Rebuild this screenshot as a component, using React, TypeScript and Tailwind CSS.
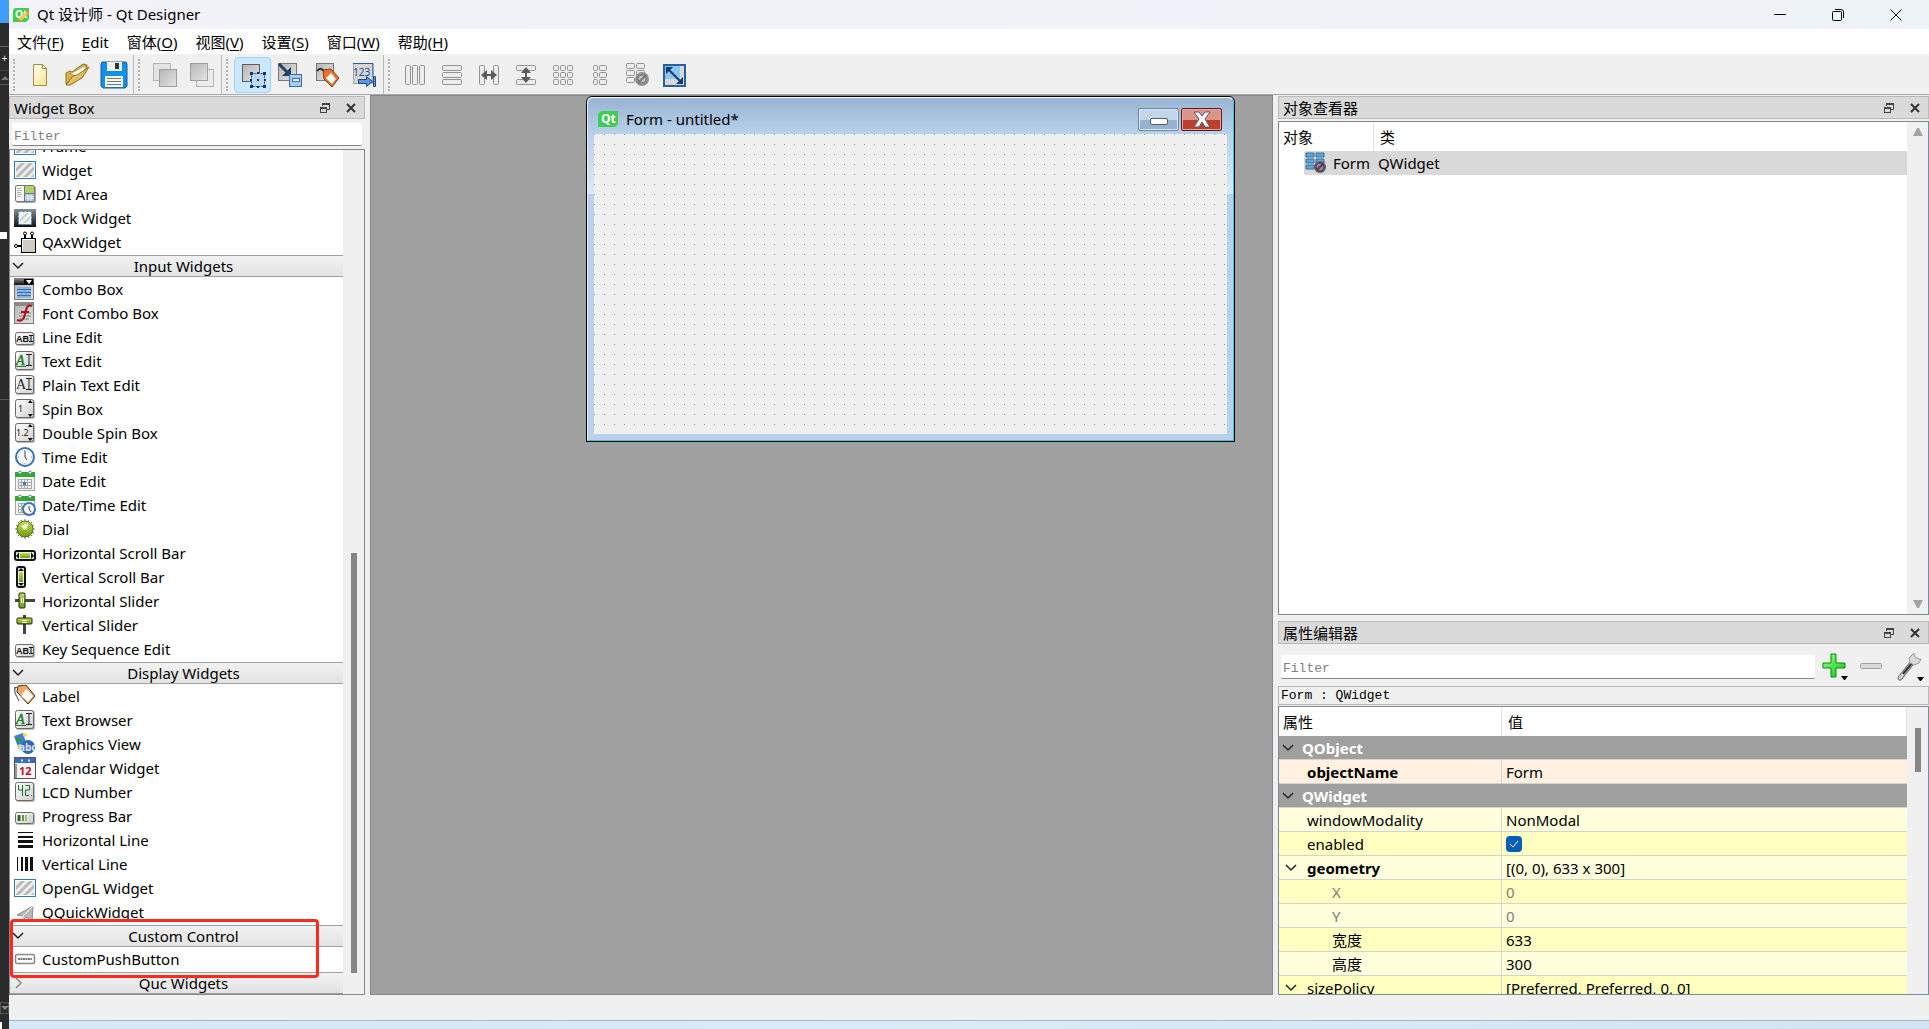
import React from 'react';

type IconProps = { children: React.ReactNode; size?: number };

const Icon: React.FC<IconProps> = ({ children, size = 22 }) => (
  <svg width={size} height={size} viewBox={`0 0 ${size} ${size}`} className="shrink-0" aria-hidden="true">
    {children}
  </svg>
);

// Bevelled grey plate shared by most of the input widget icons
const Plate: React.FC<{ y?: number; h?: number }> = ({ y = 1, h = 19 }) => (
  <>
    <rect x="2" y={y + 1} width="19" height={h} rx="2" fill="#bbb" />
    <rect x="1.5" y={y + 0.5} width="18" height={h - 1} rx="2" fill="url(#plate)" stroke="#6a6a6a" />
  </>
);

const SharedDefs = () => (
  <svg width="0" height="0" className="absolute" aria-hidden="true">
    <defs>
      <linearGradient id="plate" x1="0" y1="0" x2="1" y2="1">
        <stop offset="0" stopColor="#fff" />
        <stop offset="1" stopColor="#cfcfcf" />
      </linearGradient>
      <linearGradient id="steel" x1="0" y1="0" x2="1" y2="1">
        <stop offset="0" stopColor="#b5b5b5" />
        <stop offset="1" stopColor="#e4e4e4" />
      </linearGradient>
      <linearGradient id="dark" x1="0" y1="0" x2="0" y2="1">
        <stop offset="0" stopColor="#8c8c8c" />
        <stop offset="1" stopColor="#111" />
      </linearGradient>
      <linearGradient id="lime" x1="0" y1="0" x2="0" y2="1">
        <stop offset="0" stopColor="#c3e04a" />
        <stop offset="1" stopColor="#6f9a10" />
      </linearGradient>
      <linearGradient id="gold" x1="0" y1="0" x2="1" y2="1">
        <stop offset="0" stopColor="#fbe9a3" />
        <stop offset="1" stopColor="#c99a26" />
      </linearGradient>
      <linearGradient id="paper" x1="0" y1="0" x2="1" y2="1">
        <stop offset="0" stopColor="#fffef0" />
        <stop offset="1" stopColor="#f5e492" />
      </linearGradient>
      <linearGradient id="plus" x1="0" y1="0" x2="1" y2="1">
        <stop offset="0" stopColor="#a6f7a0" />
        <stop offset="1" stopColor="#00c800" />
      </linearGradient>
    </defs>
  </svg>
);

const HatchIcon = () => (
  <Icon>
    <rect x="0.5" y="2.5" width="21" height="17" fill="#fff" stroke="#2f78c4" />
    <rect x="2" y="4" width="18" height="14" fill="#ededeb" />
    <path d="M7 4h4l-9 9V9zM15 4h4L5 18H2v-1zM20 7v4l-7 7H9zM20 15v3h-3z" fill="#b8b8b6" />
  </Icon>
);

const MdiIcon = () => (
  <Icon>
    <rect x="2" y="3" width="20" height="17" rx="2" fill="#aaa" />
    <rect x="1.5" y="2.5" width="19" height="16" rx="1.5" fill="#f6f6f6" stroke="#777" />
    <rect x="11" y="3" width="9" height="7" fill="#a9d46c" />
    <rect x="11" y="11" width="9" height="7" fill="#9dbfe8" />
    <path d="M11 13.500h9M11 15.500h9M14 11v7M17 11v7" stroke="#e9f1fb" />
    <path d="M10.500 3v15M11 10.500h9" stroke="#777" />
    <path d="M3 5.500h4M3 7.500h5M3 9.500h4M3 11.500h5M3 13.500h4" stroke="#b5b5b5" />
  </Icon>
);

const DockIcon = () => (
  <Icon>
    <rect x="0" y="2" width="22" height="18" fill="url(#dark)" />
    <rect x="4.500" y="4.500" width="13" height="13" fill="#eef3fa" stroke="#3a7cc9" strokeDasharray="2 2" />
    <path d="M6 12l6-6h3l-9 9zM9 16l7-7v3l-4 4z" fill="#cfcfcf" />
  </Icon>
);

const AxIcon = () => (
  <Icon>
    <rect x="7.500" y="7.500" width="14" height="14" fill="#cfcac2" stroke="#000" />
    <path d="M8.500 20V8.500H20" stroke="#fff" fill="none" />
    <path d="M11 7V3M18 7V3M7 15H3" stroke="#000" strokeWidth="2" />
    <circle cx="11" cy="2.500" r="1.500" fill="#fff" stroke="#000" />
    <circle cx="18" cy="2.500" r="1.500" fill="#fff" stroke="#000" />
    <circle cx="2" cy="15" r="1.500" fill="#fff" stroke="#000" />
  </Icon>
);

const ComboIcon = () => (
  <Icon>
    <rect x="0.500" y="0.500" width="19" height="21" fill="url(#steel)" stroke="#777" />
    <rect x="0" y="0" width="20" height="7" fill="url(#dark)" />
    <path d="M10 1h9v5h-9z" fill="#000" />
    <path d="M12 2h6l-3 4z" fill="#fff" />
    <rect x="3" y="9" width="14" height="11" fill="#86b3e2" />
    <path d="M3 11.500h14M3 14.500h14M3 17.500h14" stroke="#3f6fa5" />
  </Icon>
);

const FontComboIcon = () => (
  <Icon>
    <rect x="0.500" y="0.500" width="19" height="21" fill="url(#steel)" stroke="#777" />
    <rect x="0" y="0" width="20" height="4" fill="#8a8a8a" />
    <path d="M5 11h12M5 14h12M5 17h10" stroke="#aaa" strokeWidth="2" />
    <path d="M18 4c-5-2-6 3-7 8s-3 8-8 6M7 10h8" stroke="#b00f1a" strokeWidth="2" fill="none" />
  </Icon>
);

const AbiIcon = () => (
  <Icon>
    <Plate y={6} h={13} />
    <text x="2" y="16" fontSize="9" fontWeight="bold" fontFamily="Liberation Sans, sans-serif" fill="#111">
      AB
    </text>
    <path d="M15 9.500h4M15 15.500h4M17 9v7" stroke="#111" />
  </Icon>
);

const AiIcon: React.FC<{ green?: boolean }> = ({ green }) => (
  <Icon>
    <Plate />
    <text
      x="2"
      y="15"
      fontSize="14"
      fontStyle={green ? 'italic' : 'normal'}
      fontFamily="Liberation Serif, serif"
      stroke={green ? '#237a2c' : 'none'}
      strokeWidth="0.5"
      fill={green ? '#237a2c' : '#222'}
    >
      A
    </text>
    {green && <path d="M2 16.500h10" stroke="#237a2c" />}
    <path d="M12 4.500h6M12 15.500h6M15 5v11" stroke="#222" />
  </Icon>
);

const SpinIcon: React.FC<{ label: string }> = ({ label }) => (
  <Icon>
    <Plate />
    <text x={label.length > 1 ? 2 : 4} y="14" fontSize="9" fontFamily="Noto Sans, sans-serif" fill="#222">
      {label}
    </text>
    <path d="M14 5l2-3 3 3zM14 16h5l-3 3z" fill="#111" />
  </Icon>
);

const Clock: React.FC<{ cx: number; cy: number; r: number }> = ({ cx, cy, r }) => (
  <>
    <circle cx={cx} cy={cy} r={r} fill="#f4f6fa" stroke="#3b74b9" strokeWidth="2" />
    <path d={`M${cx} ${cy - r + 3}V${cy}l2 3`} stroke="#444" fill="none" />
  </>
);

const TimeIcon = () => (
  <Icon>
    <Clock cx={11} cy={11} r={9} />
    <path d="M11 4v1M11 17v1M4 11h1M17 11h1" stroke="#8b95a5" />
  </Icon>
);

const DateIcon: React.FC<{ clock?: boolean }> = ({ clock }) => (
  <Icon>
    <rect x="1.500" y="4.500" width="19" height="16" fill="#f3f3f3" stroke="#a6a6a6" />
    <rect x="1" y="2" width="20" height="5" fill="#2ea836" />
    <circle cx="6" cy="2.500" r="1.500" fill="#eee" stroke="#888" />
    <circle cx="16" cy="2.500" r="1.500" fill="#eee" stroke="#888" />
    <path d="M4 9.500h14M4 12.500h14M4 15.500h14M4 18.500h14M4.500 9v10M7.500 9v10M10.500 9v10M13.500 9v10M17.500 9v10" stroke="#a9a9a9" />
    {clock ? <Clock cx={15} cy={15} r={6} /> : <rect x="9" y="12" width="3" height="3" fill="#2f78d4" />}
  </Icon>
);

const DialIcon = () => (
  <Icon>
    <path d="M11 1v20M1 11h20M4 4l14 14M18 4L4 18M7 2l8 18M15 2L7 20M2 7l18 8M2 15l18-8" stroke="#777" />
    <circle cx="11" cy="11" r="8" fill="url(#lime)" stroke="#4f7311" />
    <path d="M7 8l7-3-1 6-3 1z" fill="#f4f9df" />
  </Icon>
);

const HScrollIcon = () => (
  <Icon>
    <rect x="1" y="9" width="20" height="9" rx="2" fill="#f2f2f2" stroke="#111" strokeWidth="2" />
    <rect x="6" y="11" width="10" height="5" fill="url(#lime)" />
    <path d="M5 10v7l-3-3zM17 10v7l3-3z" fill="#111" />
  </Icon>
);

const VScrollIcon = () => (
  <Icon>
    <rect x="3" y="1" width="8" height="20" rx="2" fill="#f2f2f2" stroke="#111" strokeWidth="2" />
    <rect x="5" y="6" width="4" height="10" fill="url(#lime)" />
    <path d="M4 5l3-3 3 3zM4 17h6l-3 3z" fill="#111" />
  </Icon>
);

const HSliderIcon = () => (
  <Icon>
    <path d="M1 10.500h20" stroke="#444" strokeWidth="3" />
    <rect x="5" y="3" width="6" height="15" rx="1" fill="url(#lime)" stroke="#222" />
    <path d="M7.500 8v5M9.500 8v5" stroke="#f5fbdc" />
  </Icon>
);

const VSliderIcon = () => (
  <Icon>
    <path d="M10.500 1v19" stroke="#444" strokeWidth="3" />
    <rect x="3" y="4" width="15" height="6" rx="1" fill="url(#lime)" stroke="#222" />
    <path d="M8 6.500h5M8 8.500h5" stroke="#f5fbdc" />
  </Icon>
);

const TagIcon = () => (
  <Icon>
    <path d="M0 3c4-2 4 2 6 4M1 3c-1 6 2 8 4 13" stroke="#333" fill="none" />
    <path d="M4 1l8-1 9 11-7 8L3 7z" fill="#f0a868" stroke="#4a2c15" />
    <path d="M12 4l7 7-5 6-7-6z" fill="#fff" />
  </Icon>
);

const GraphicsIcon = () => (
  <Icon>
    <path d="M0 3l9-3 4 13-8 4z" fill="#3d7fe0" />
    <path d="M3 12l9-2 1 3-8 4z" fill="#e7cf8b" />
    <path d="M2 6c3-3 5 0 6 1l-2 1 2 5-3-5-3 1z" fill="#2c9a36" />
    <circle cx="11" cy="2" r="2" fill="#ffd84a" />
    <circle cx="14" cy="14" r="7" fill="#3567b5" />
    <text x="5" y="18" fontSize="10" fontWeight="bold" fontFamily="Noto Sans, sans-serif" fill="#dbe6f6">
      abc
    </text>
  </Icon>
);

const CalendarIcon = () => (
  <Icon>
    <rect x="0.500" y="0.500" width="21" height="21" fill="#f4f4f4" stroke="#555" />
    <rect x="1" y="1" width="20" height="5" fill="#3a6db5" />
    <path d="M7 3.500h2M14 3.500h2" stroke="#dfe9f7" strokeWidth="2" />
    <path d="M1 7v14h2V7z" fill="#999" />
    <text x="5" y="18" fontSize="11" fontWeight="bold" fontFamily="Noto Sans, sans-serif" fill="#c4161c">
      12
    </text>
  </Icon>
);

const LcdIcon = () => (
  <Icon>
    <Plate />
    <path d="M4.500 4v5h4M8.500 4v11M11.500 4.500h4V9h-4v5.500H15M17 14.500h1" stroke="#1d6b2a" fill="none" />
  </Icon>
);

const ProgressIcon = () => (
  <Icon>
    <Plate y={7} h={12} />
    <path d="M5 10v6" stroke="#2f6c12" strokeWidth="3" />
    <path d="M9 10v6" stroke="#6b9540" strokeWidth="2" />
    <path d="M12 10v6" stroke="#9fb98b" strokeWidth="2" />
    <path d="M16 10v6" stroke="#ccd6c5" strokeWidth="2" />
  </Icon>
);

const HLineIcon = () => (
  <Icon>
    <path d="M4 3.500h15" stroke="#111" />
    <path d="M4 8h15" stroke="#111" strokeWidth="2" />
    <path d="M4 12.500h15" stroke="#111" strokeWidth="3" />
    <path d="M4 17.500h15" stroke="#111" strokeWidth="3" />
  </Icon>
);

const VLineIcon = () => (
  <Icon>
    <path d="M3.500 4v14" stroke="#111" />
    <path d="M8 4v14" stroke="#111" strokeWidth="2" />
    <path d="M12.500 4v14" stroke="#111" strokeWidth="3" />
    <path d="M17.500 4v14" stroke="#111" strokeWidth="3" />
  </Icon>
);

const QuickIcon = () => (
  <Icon>
    <path d="M3 14L19 5l-1 15-6-4-3 3v-4z" fill="#b9b9b9" stroke="#8c8c8c" />
    <path d="M19 5L9 15v4" stroke="#fff" fill="none" />
  </Icon>
);

const ButtonIcon = () => (
  <Icon>
    <rect x="1.500" y="6.500" width="19" height="9" rx="1.500" fill="#fafafa" stroke="#8a8a8a" strokeWidth="1.500" />
    <path d="M4 11h14" stroke="#777" strokeWidth="2" strokeDasharray="2 0.500" />
  </Icon>
);

const QtIcon = () => (
  <svg width="20" height="16" viewBox="0 0 20 16" className="shrink-0" aria-hidden="true">
    <path d="M3 0h17v13l-3 3H0V3z" fill="#41cd52" />
    <text x="3" y="12" fontSize="12" fontWeight="bold" fontFamily="Open Sans, sans-serif" fill="#fff">
      Qt
    </text>
  </svg>
);

const DesignerIcon = () => (
  <svg width="16" height="16" viewBox="0 0 16 16" className="shrink-0" aria-hidden="true">
    <path d="M2 1h14v11l-3 3H0V3z" fill="#41cd52" />
    <text x="2" y="11" fontSize="10" fontWeight="bold" fontFamily="Open Sans, sans-serif" fill="#fff">
      Qt
    </text>
    <path d="M5 15l1-4 8-7 2 2-8 8z" fill="#f7c948" />
    <path d="M5 15l1-3 2 2z" fill="#b98a3a" />
    <path d="M13 5l2-2 1 1v2l-1 1z" fill="#e08b3a" />
  </svg>
);

const Box: React.FC<{ x: number; y: number; w: number; h: number }> = ({ x, y, w, h }) => (
  <rect x={x + 0.5} y={y + 0.5} width={w - 1} height={h - 1} rx="1" fill="#ececec" stroke="#939393" />
);

const NewIcon = () => (
  <Icon size={26}>
    <path d="M6.500 2.500h9l4 4v17h-13z" fill="url(#paper)" stroke="#a8893a" />
    <path d="M15.500 2.500v4h4z" fill="#fff" stroke="#a8893a" />
  </Icon>
);

const OpenIcon = () => (
  <Icon size={26}>
    <path d="M2 22V11l4-2 2 1 11-8 4 1v4z" fill="#d8b04a" stroke="#94701c" />
    <path d="M6 12L20 4l2 2-6 9z" fill="#fffdf2" stroke="#b89a52" />
    <path d="M2 23l7-9 4-1 12-8-7 11-12 7z" fill="url(#gold)" stroke="#94701c" />
  </Icon>
);

const SaveIcon = () => (
  <Icon size={28}>
    <path d="M2 1h24l1 2v22l-2 2H3l-2-2V3z" fill="#0f8fee" stroke="#1d5c94" />
    <rect x="7" y="1" width="15" height="9" fill="#eee" />
    <rect x="15" y="2" width="4" height="6" fill="#333" />
    <rect x="5" y="15" width="18" height="11" fill="#f5f5f5" />
    <path d="M7 17.500h14M7 20.500h14M7 23.500h14" stroke="#777" />
  </Icon>
);

const LowerIcon = () => (
  <Icon size={26}>
    <rect x="1.500" y="1.500" width="17" height="17" fill="#e3e3e3" stroke="#b5b5b5" />
    <rect x="7.500" y="7.500" width="17" height="17" fill="url(#steel)" stroke="#a0a0a0" />
  </Icon>
);

const RaiseIcon = () => (
  <Icon size={26}>
    <rect x="7.500" y="7.500" width="17" height="17" fill="#ececec" stroke="#b5b5b5" />
    <rect x="1.500" y="1.500" width="17" height="17" fill="url(#steel)" stroke="#a0a0a0" />
  </Icon>
);

const EditWidgetsIcon = () => (
  <Icon size={26}>
    <rect x="2.500" y="2.500" width="17" height="17" fill="url(#steel)" stroke="#5c5c5c" />
    <rect x="11.500" y="11.500" width="13" height="13" fill="#bdd8f7" stroke="#1d4f91" strokeDasharray="2 1" />
    <path d="M10 10h3v3h-3zM17 10h2v2h-2zM23 10h3v3h-3zM10 17h2v2h-2zM24 17h2v2h-2zM10 23h3v3h-3zM17 24h2v2h-2zM23 23h3v3h-3zM17 17h2v2h-2z" fill="#17365f" />
  </Icon>
);

const SignalsIcon = () => (
  <Icon size={26}>
    <rect x="1.500" y="1.500" width="18" height="17" fill="url(#steel)" stroke="#777" />
    <path d="M2 2l8 8" stroke="#23405f" strokeWidth="3" fill="none" />
    <path d="M14 5v9H5z" fill="#23405f" />
    <rect x="12.500" y="12.500" width="12" height="12" fill="#a9ccf5" stroke="#3a6db0" />
    <rect x="15.500" y="16.500" width="7" height="3" fill="#fff" stroke="#3a6db0" />
  </Icon>
);

const BuddyIcon = () => (
  <Icon size={26}>
    <rect x="2.500" y="1.500" width="17" height="17" fill="url(#steel)" stroke="#777" />
    <path d="M3 9c3-4 6-2 8 2" stroke="#333" strokeWidth="2" fill="none" />
    <path d="M9 8l8-1 8 9-7 9-8-8z" fill="#e8722a" stroke="#8a3b0c" />
    <path d="M17 11l5 6-4 5-6-6z" fill="#fff" />
  </Icon>
);

const TabOrderIcon = () => (
  <Icon size={26}>
    <rect x="2.500" y="1.500" width="19" height="20" fill="#d5d5d5" stroke="#9aa6b5" />
    <path d="M2 1.500h20v13" stroke="#2f5f9e" fill="none" />
    <text x="2" y="14" fontSize="10" fontFamily="Noto Sans, sans-serif" fill="#1f4a86">
      123
    </text>
    <path d="M7.500 17.500h8v-3l6 5-6 5v-3h-8zM22.500 14.500h2v10h-2z" fill="#5b95e0" stroke="#1f4a86" />
  </Icon>
);

const HLayoutIcon = () => (
  <Icon size={24}>
    <Box x={2} y={2} w={6} h={20} />
    <Box x={9} y={2} w={6} h={20} />
    <Box x={16} y={2} w={6} h={20} />
  </Icon>
);

const VLayoutIcon = () => (
  <Icon size={24}>
    <Box x={2} y={2} w={20} h={6} />
    <Box x={2} y={9} w={20} h={6} />
    <Box x={2} y={16} w={20} h={6} />
  </Icon>
);

const HSplitIcon = () => (
  <Icon size={24}>
    <Box x={2} y={2} w={6} h={20} />
    <Box x={16} y={2} w={6} h={20} />
    <path d="M4 12l6-5v4h4V7l6 5-6 5v-4h-4v4z" fill="#5c5c5c" />
  </Icon>
);

const VSplitIcon = () => (
  <Icon size={24}>
    <Box x={2} y={2} w={20} h={6} />
    <Box x={2} y={16} w={20} h={6} />
    <path d="M12 4l5 6h-4v4h4l-5 6-5-6h4v-4H7z" fill="#5c5c5c" />
  </Icon>
);

const GridIcon = () => (
  <Icon size={24}>
    {[2, 9, 16].map(y => [2, 9, 16].map(x => <Box key={`${x}-${y}`} x={x} y={y} w={6} h={6} />))}
  </Icon>
);

const FormLayoutIcon = () => (
  <Icon size={24}>
    {[2, 9, 16].map(y => (
      <React.Fragment key={y}>
        <Box x={5} y={y} w={5} h={6} />
        <Box x={11} y={y} w={8} h={6} />
      </React.Fragment>
    ))}
  </Icon>
);

const BreakLayoutIcon = () => (
  <Icon size={26}>
    <Box x={2} y={1} w={9} h={6} />
    <Box x={12} y={1} w={9} h={6} />
    <Box x={2} y={8} w={9} h={6} />
    <Box x={12} y={8} w={9} h={6} />
    <Box x={2} y={15} w={9} h={6} />
    <circle cx="18" cy="17" r="7" fill="#8f8f8f" />
    <circle cx="18" cy="17" r="4" fill="#c4c4c4" stroke="#777" />
    <path d="M14 21l8-8" stroke="#777" strokeWidth="2" />
  </Icon>
);

const AdjustIcon = () => (
  <Icon size={26}>
    <rect x="3" y="3" width="21" height="21" fill="#d8d8d8" stroke="#2a5f9e" strokeWidth="2" />
    <rect x="4" y="4" width="15" height="13" fill="#8cc4f2" />
    <path d="M7 7l12 12" stroke="#103c6b" strokeWidth="2" />
    <path d="M5 5h7l-7 7zM22 22h-7l7-7z" fill="#103c6b" />
  </Icon>
);

const FormObjectIcon = () => (
  <Icon>
    <path d="M1 1h8v4H1zM11 1h8v4h-8zM1 7h8v4H1zM11 7h8v4h-8zM1 13h8v4H1z" fill="#58a9e0" stroke="#3d6d95" />
    <circle cx="15" cy="15" r="6" fill="#6c5566" />
    <circle cx="15" cy="15" r="4" fill="#8095b8" stroke="#5e3444" />
    <path d="M12 18l6-6" stroke="#5e3444" strokeWidth="2" />
  </Icon>
);

const Chevron: React.FC<{ closed?: boolean }> = ({ closed }) => (
  <svg width="12" height="12" viewBox="0 0 12 12" className="shrink-0" fill="none" strokeWidth="1.5" aria-hidden="true">
    {closed ? <path d="M4 1l5 5-5 5" stroke="#8a8a8a" /> : <path d="M1 3l5 5 5-5" stroke="#222" />}
  </svg>
);

interface WidgetGroup {
  title: string;
  open: boolean;
  marked?: boolean;
  items: { label: string; icon: React.ReactNode }[];
}

const CONTAINER_ITEMS = [
  { label: 'Frame', icon: <HatchIcon /> },
  { label: 'Widget', icon: <HatchIcon /> },
  { label: 'MDI Area', icon: <MdiIcon /> },
  { label: 'Dock Widget', icon: <DockIcon /> },
  { label: 'QAxWidget', icon: <AxIcon /> },
];

const GROUPS: WidgetGroup[] = [
  {
    title: 'Input Widgets',
    open: true,
    items: [
      { label: 'Combo Box', icon: <ComboIcon /> },
      { label: 'Font Combo Box', icon: <FontComboIcon /> },
      { label: 'Line Edit', icon: <AbiIcon /> },
      { label: 'Text Edit', icon: <AiIcon green /> },
      { label: 'Plain Text Edit', icon: <AiIcon /> },
      { label: 'Spin Box', icon: <SpinIcon label="1" /> },
      { label: 'Double Spin Box', icon: <SpinIcon label="1.2" /> },
      { label: 'Time Edit', icon: <TimeIcon /> },
      { label: 'Date Edit', icon: <DateIcon /> },
      { label: 'Date/Time Edit', icon: <DateIcon clock /> },
      { label: 'Dial', icon: <DialIcon /> },
      { label: 'Horizontal Scroll Bar', icon: <HScrollIcon /> },
      { label: 'Vertical Scroll Bar', icon: <VScrollIcon /> },
      { label: 'Horizontal Slider', icon: <HSliderIcon /> },
      { label: 'Vertical Slider', icon: <VSliderIcon /> },
      { label: 'Key Sequence Edit', icon: <AbiIcon /> },
    ],
  },
  {
    title: 'Display Widgets',
    open: true,
    items: [
      { label: 'Label', icon: <TagIcon /> },
      { label: 'Text Browser', icon: <AiIcon green /> },
      { label: 'Graphics View', icon: <GraphicsIcon /> },
      { label: 'Calendar Widget', icon: <CalendarIcon /> },
      { label: 'LCD Number', icon: <LcdIcon /> },
      { label: 'Progress Bar', icon: <ProgressIcon /> },
      { label: 'Horizontal Line', icon: <HLineIcon /> },
      { label: 'Vertical Line', icon: <VLineIcon /> },
      { label: 'OpenGL Widget', icon: <HatchIcon /> },
      { label: 'QQuickWidget', icon: <QuickIcon /> },
    ],
  },
  {
    title: 'Custom Control',
    open: true,
    marked: true,
    items: [{ label: 'CustomPushButton', icon: <ButtonIcon /> }],
  },
  { title: 'Quc Widgets', open: false, items: [] },
];

const MENUS = [
  { text: '文件', key: 'F' },
  { text: '', key: 'Edit' },
  { text: '窗体', key: 'O' },
  { text: '视图', key: 'V' },
  { text: '设置', key: 'S' },
  { text: '窗口', key: 'W' },
  { text: '帮助', key: 'H' },
];

const TOOL_GROUPS = [
  [
    { name: 'New', icon: <NewIcon /> },
    { name: 'Open', icon: <OpenIcon /> },
    { name: 'Save', icon: <SaveIcon /> },
  ],
  [
    { name: 'Send to Back', icon: <LowerIcon /> },
    { name: 'Bring to Front', icon: <RaiseIcon /> },
  ],
  [
    { name: 'Edit Widgets', icon: <EditWidgetsIcon />, active: true },
    { name: 'Edit Signals/Slots', icon: <SignalsIcon /> },
    { name: 'Edit Buddies', icon: <BuddyIcon /> },
    { name: 'Edit Tab Order', icon: <TabOrderIcon /> },
  ],
  [
    { name: 'Lay Out Horizontally', icon: <HLayoutIcon /> },
    { name: 'Lay Out Vertically', icon: <VLayoutIcon /> },
    { name: 'Horizontal Splitter', icon: <HSplitIcon /> },
    { name: 'Vertical Splitter', icon: <VSplitIcon /> },
    { name: 'Lay Out in a Grid', icon: <GridIcon /> },
    { name: 'Lay Out in a Form', icon: <FormLayoutIcon /> },
    { name: 'Break Layout', icon: <BreakLayoutIcon /> },
    { name: 'Adjust Size', icon: <AdjustIcon /> },
  ],
];

interface Property {
  name: string;
  value?: string;
  checked?: boolean;
  kind: 'group' | 'top' | 'child';
  expandable?: boolean;
  bold?: boolean;
  dim?: boolean;
  bg: string;
}

const PROPERTIES: Property[] = [
  { name: 'QObject', kind: 'group', expandable: true, bg: 'bg-[#a0a0a0]' },
  { name: 'objectName', value: 'Form', kind: 'top', bold: true, bg: 'bg-[#fff0df]' },
  { name: 'QWidget', kind: 'group', expandable: true, bg: 'bg-[#a0a0a0]' },
  { name: 'windowModality', value: 'NonModal', kind: 'top', bg: 'bg-[#ffffdc]' },
  { name: 'enabled', checked: true, kind: 'top', bg: 'bg-[#ffffbf]' },
  { name: 'geometry', value: '[(0, 0), 633 x 300]', kind: 'top', expandable: true, bold: true, bg: 'bg-[#ffffdc]' },
  { name: 'X', value: '0', kind: 'child', dim: true, bg: 'bg-[#ffffbf]' },
  { name: 'Y', value: '0', kind: 'child', dim: true, bg: 'bg-[#ffffdc]' },
  { name: '宽度', value: '633', kind: 'child', bg: 'bg-[#ffffbf]' },
  { name: '高度', value: '300', kind: 'child', bg: 'bg-[#ffffdc]' },
  { name: 'sizePolicy', value: '[Preferred, Preferred, 0, 0]', kind: 'top', expandable: true, bg: 'bg-[#ffffbf]' },
];

const TitleBar = () => (
  <header className="flex h-[29px] shrink-0 items-center bg-linear-to-r from-[#f2f2f8] to-[#eef3f8] px-1">
    <DesignerIcon />
    <h1 className="flex-1 pl-2 text-[15px]">Qt 设计师 - Qt Designer</h1>
    <button type="button" aria-label="Minimize" className="flex h-full w-[58px] items-center justify-center">
      <span className="h-px w-3 bg-black" />
    </button>
    <button type="button" aria-label="Restore" className="flex h-full w-[58px] items-center justify-center">
      <svg width="12" height="12" viewBox="0 0 12 12" fill="none" stroke="#000">
        <rect x="0.5" y="2.5" width="9" height="9" rx="1" />
        <path d="M3 0.500h6a2.500 2.500 0 0 1 2.500 2.500v6" />
      </svg>
    </button>
    <button type="button" aria-label="Close" className="flex h-full w-[58px] items-center justify-center">
      <svg width="12" height="12" viewBox="0 0 12 12" stroke="#000">
        <path d="M0.500 0.500l11 11M11.500 0.500l-11 11" />
      </svg>
    </button>
  </header>
);

const MenuBar = () => (
  <nav className="flex h-[26px] shrink-0 items-center gap-0.5 border-b border-[#f2f2f2] bg-white">
    {MENUS.map(menu => (
      <button key={menu.key} type="button" className="px-2 text-[15px] leading-5">
        {menu.text ? (
          <>
            {menu.text}(<span className="underline underline-offset-2">{menu.key}</span>)
          </>
        ) : (
          <>
            <span className="underline underline-offset-2">E</span>dit
          </>
        )}
      </button>
    ))}
  </nav>
);

const ToolBar = () => (
  <div className="flex h-10 shrink-0 border-b border-[#a9a9a9]" role="toolbar">
    {TOOL_GROUPS.map((group, index) => (
      <div
        key={index}
        className={`flex items-center pr-px ${index < TOOL_GROUPS.length - 1 ? 'border-r border-[#b9b9b9]' : ''}`}
      >
        <span className="ml-1 mr-1.5 h-8 border-l-2 border-dotted border-[#b3b3b3]" />
        {group.map(tool => (
          <button
            key={tool.name}
            type="button"
            aria-label={tool.name}
            className={`flex h-9 w-[37px] items-center justify-center rounded-sm border ${
              'active' in tool ? 'border-[#99d1ff] bg-[#cce8ff]' : 'border-transparent'
            }`}
          >
            {tool.icon}
          </button>
        ))}
      </div>
    ))}
  </div>
);

const DockTitle: React.FC<{ title: string }> = ({ title }) => (
  <div className="flex h-[23px] shrink-0 items-center border border-[#b9b9b9] bg-[#dadada] pl-1 pr-[7px]">
    <h2 className="flex-1 text-[15px] leading-5">{title}</h2>
    <button type="button" aria-label={`Float ${title}`} className="mr-3.5">
      <svg width="12" height="12" viewBox="0 0 12 12" fill="none" stroke="#444">
        <path d="M3.500 4V1.500h7v6H8" />
        <path d="M3 2h8M1 6h7" strokeWidth="2" />
        <rect x="1.500" y="5.500" width="6" height="5" />
      </svg>
    </button>
    <button type="button" aria-label={`Close ${title}`}>
      <svg width="12" height="12" viewBox="0 0 12 12" stroke="#333" strokeWidth="2">
        <path d="M2 2l8 8M10 2l-8 8" />
      </svg>
    </button>
  </div>
);

const WidgetRow: React.FC<{ label: string; icon: React.ReactNode }> = ({ label, icon }) => (
  <li className="flex h-6 items-center gap-1.5 pl-1 text-[15px] leading-5">
    {icon}
    {label}
  </li>
);

const WidgetBox = () => (
  <aside className="flex w-[356px] shrink-0 flex-col pt-px">
    <DockTitle title="Widget Box" />
    <input
      type="text"
      aria-label="Filter widgets"
      placeholder="Filter"
      className="mx-[3px] mb-[3px] mt-1 h-[23px] rounded-xs border-b border-[#868686] bg-white px-0.5 pt-1 font-['Liberation_Mono',monospace] text-[13px] placeholder:text-[#808080]"
    />
    <div className="flex min-h-0 flex-1 border border-[#828790]">
      <div className="flex min-w-0 flex-1 flex-col justify-end overflow-hidden bg-white">
        <ul className="pb-px">
          {CONTAINER_ITEMS.map(item => (
            <WidgetRow key={item.label} {...item} />
          ))}
        </ul>
        {GROUPS.map(group => (
          <section key={group.title} className="relative">
            <button
              type="button"
              aria-expanded={group.open}
              className="flex h-[22px] w-full items-center border-y border-[#a0a0a0] bg-linear-to-b from-[#f2f2f2] to-[#e3e3e3] pl-0.5 pr-1"
            >
              <Chevron closed={!group.open} />
              <span className="flex-1 pl-1 text-center text-[15px] leading-5">{group.title}</span>
            </button>
            {group.open && (
              <ul className="pb-px">
                {group.items.map(item => (
                  <WidgetRow key={item.label} {...item} />
                ))}
              </ul>
            )}
            {group.marked && (
              <div className="absolute -bottom-1.5 -top-1.5 left-0 z-10 w-[309px] rounded-sm border-3 border-[#ff2a1c]" />
            )}
          </section>
        ))}
      </div>
      <div className="flex w-[21px] flex-col items-center justify-end bg-[#f0f0f0] pb-[21px]">
        <div className="h-[51%] w-1.5 bg-[#868686]" />
      </div>
    </div>
  </aside>
);

const FormWindow = () => (
  <div className="absolute left-[215px] top-0 rounded-t-md border border-black bg-[#b9d1ea]">
    <div className="rounded-t-md border border-b-[#35c8e0] border-l-[#e3eefa] border-r-[#35c8e0] border-t-white">
      <div className="flex h-9 items-center rounded-t-md bg-linear-to-b from-[#98b4d2] to-[#b9d1ea] pl-2.5 pr-[11px] pt-1.5">
        <QtIcon />
        <span className="flex-1 pl-2 text-[15px]">Form - untitled*</span>
        <button
          type="button"
          aria-label="Minimize form"
          className="mr-0.5 flex h-[23px] w-[41px] items-center justify-center rounded-xs border border-[#6c87ab] bg-linear-to-b from-[#c3d6ea] from-50% to-[#97b1d0] to-50% shadow-[inset_0_0_0_1px_#dbe7f4]"
        >
          <span className="mt-1 h-[7px] w-[18px] rounded-xs border border-[#5c5c6c] bg-white" />
        </button>
        <button
          type="button"
          aria-label="Close form"
          className="flex h-[23px] w-[41px] items-center justify-center rounded-xs border border-[#5b1d23] bg-linear-to-b from-[#dc9488] from-50% to-[#bb3f2b] to-50% shadow-[inset_0_0_0_1px_#e5a79c]"
        >
          <svg width="20" height="17" viewBox="0 0 20 17" aria-hidden="true">
            <path
              d="M2 1h5l3 4 3-4h5l-5 7 5 8h-5l-3-5-3 5H2l5-8z"
              fill="#f5f5f5"
              stroke="#5c5c6c"
              strokeLinejoin="round"
            />
          </svg>
        </button>
      </div>
      <div className="bg-linear-to-b from-[#b9d1ea] to-[#dce8f6] bg-[length:100%_60px] bg-no-repeat px-1.5 pb-1.5">
        <div className="h-[300px] w-[633px] bg-[#f0f0f0] bg-[conic-gradient(from_270deg_at_1px_1px,#a0a0a0_90deg,transparent_0)] bg-[length:10px_10px]" />
      </div>
    </div>
  </div>
);

const ObjectInspector = () => (
  <section className="flex min-h-0 flex-1 flex-col">
    <DockTitle title="对象查看器" />
    <div className="mt-0.5 flex min-h-0 flex-1 border border-[#828790] bg-white">
      <div className="min-w-0 flex-1">
        <table className="w-full border-separate border-spacing-0 text-left text-[15px] leading-5">
          <thead>
            <tr>
              <th className="h-[29px] w-[95px] border-r border-[#e3e3e3] pl-1 font-normal">对象</th>
              <th className="pl-1.5 font-normal">类</th>
            </tr>
          </thead>
          <tbody>
            <tr>
              <td className="p-0 pl-[25px]">
                <div className="flex h-6 items-center gap-1.5 rounded-l-xs bg-[#d9d9d9] pl-px">
                  <FormObjectIcon />
                  Form
                </div>
              </td>
              <td className="bg-[#d9d9d9] p-0 pl-1">QWidget</td>
            </tr>
          </tbody>
        </table>
      </div>
      <div className="flex w-[21px] flex-col items-center justify-between bg-[#f0f0f0] py-1.5">
        <svg width="10" height="8" viewBox="0 0 10 8" aria-hidden="true">
          <path d="M0 8l4-8h2l4 8z" fill="#a3a3a3" />
        </svg>
        <svg width="10" height="8" viewBox="0 0 10 8" aria-hidden="true">
          <path d="M0 0l4 8h2l4-8z" fill="#a3a3a3" />
        </svg>
      </div>
    </div>
  </section>
);

const indent = (prop: Property) => {
  if (prop.kind === 'group') return 'pl-1';
  if (prop.kind === 'child') return 'pl-[53px]';
  return prop.expandable ? 'pl-1.5' : 'pl-7';
};

const PropertyEditor = () => (
  <section className="flex h-[374px] shrink-0 flex-col">
    <DockTitle title="属性编辑器" />
    <div className="mt-1 flex h-[38px] shrink-0 items-center pl-[3px]">
      <input
        type="text"
        aria-label="Filter properties"
        placeholder="Filter"
        className="h-6 min-w-0 flex-1 rounded-xs border-b border-[#868686] bg-white px-0.5 pt-1 font-['Liberation_Mono',monospace] text-[13px] placeholder:text-[#808080]"
      />
      <button type="button" aria-label="Add dynamic property" className="flex w-[38px] justify-center">
        <svg width="30" height="28" viewBox="0 0 30 28">
          <path d="M12 1h5v9h9v5h-9v9h-5v-9H4v-5h8z" fill="url(#plus)" stroke="#0a8f0a" />
          <path d="M22 23h7l-3 4h-1z" fill="#000" />
        </svg>
      </button>
      <button type="button" aria-label="Remove dynamic property" className="flex w-[38px] justify-center">
        <svg width="30" height="28" viewBox="0 0 30 28">
          <rect x="3.500" y="10.500" width="21" height="5" rx="1" fill="#d9d9d9" stroke="#a3a3a3" />
        </svg>
      </button>
      <button type="button" aria-label="Configure" className="flex w-[38px] justify-center">
        <svg width="30" height="30" viewBox="0 0 30 30">
          <path d="M5 26L17 11" stroke="#666" strokeWidth="5" strokeLinecap="round" />
          <path d="M5 26L17 11" stroke="#d6d6d6" strokeWidth="3" strokeLinecap="round" />
          <path d="M8 22l9-11" stroke="#333" strokeWidth="2" />
          <path d="M15 11l-1-5 5-5 1 4 4 2 2 0-2 4-5 2z" fill="#d9d9d9" stroke="#999" />
          <path d="M22 25h7l-3 4h-1z" fill="#000" />
        </svg>
      </button>
    </div>
    <div className="mb-px flex h-[19px] shrink-0 items-center border border-[#b9b9b9] pl-0.5 font-['Liberation_Mono',monospace] text-[13px] leading-4">
      Form : QWidget
    </div>
    <div className="flex min-h-0 flex-1 border border-[#828790] bg-white">
      <div className="min-w-0 flex-1 overflow-hidden">
        <table className="w-full table-fixed border-separate border-spacing-0 text-left text-[15px] leading-5">
          <thead>
            <tr>
              <th className="h-[29px] w-[223px] border-r border-[#e3e3e3] pl-1 font-normal">属性</th>
              <th className="border-r border-[#e3e3e3] pl-1.5 font-normal">值</th>
            </tr>
          </thead>
          <tbody>
            {PROPERTIES.map(prop =>
              prop.kind === 'group' ? (
                <tr key={prop.name} className={prop.bg}>
                  <th colSpan={2} className="h-6 border-b border-[#d3d3d3] p-0 pl-[3px] font-bold text-white">
                    <div className="flex items-center gap-2">
                      <Chevron />
                      {prop.name}
                    </div>
                  </th>
                </tr>
              ) : (
                <tr key={prop.name} className={`${prop.bg} ${prop.dim ? 'text-[#808080]' : ''}`}>
                  <td className={`h-6 border-b border-r border-[#d3d3d3] p-0 ${indent(prop)}`}>
                    <div className={`flex items-center gap-2.5 ${prop.bold ? 'font-bold' : ''}`}>
                      {prop.expandable && <Chevron />}
                      {prop.name}
                    </div>
                  </td>
                  <td className="border-b border-[#d3d3d3] p-0 pl-1">
                    {prop.checked ? (
                      <label className="relative flex h-4 w-4">
                        <input
                          type="checkbox"
                          defaultChecked
                          aria-label={prop.name}
                          className="h-4 w-4 appearance-none rounded-sm bg-[#005fb8]"
                        />
                        <svg viewBox="0 0 16 16" className="pointer-events-none absolute inset-0" fill="none" stroke="#fff">
                          <path d="M4 8l3 3 5-6" />
                        </svg>
                      </label>
                    ) : (
                      prop.value
                    )}
                  </td>
                </tr>
              )
            )}
          </tbody>
        </table>
      </div>
      <div className="flex w-[21px] justify-center bg-[#f0f0f0] pt-[21px]">
        <div className="h-11 w-1.5 bg-[#868686]" />
      </div>
    </div>
  </section>
);

// Sliver of the editor window lying behind the designer
const BackgroundStrip = () => (
  <div className="flex w-[9px] shrink-0 flex-col bg-[#2b2b2b]">
    <div className="h-[23px] bg-[#409eff]" />
    <div className="h-6 border-b border-[#666]" />
    <div className="flex h-6 items-center justify-center border-b border-[#444] text-[10px] text-white">+</div>
    <div className="flex h-3.5 items-center justify-center border-b border-[#555]">
      <span className="h-0 w-0 border-x-4 border-b-4 border-x-transparent border-b-[#777]" />
    </div>
    <div className="mt-[147px] h-[7px] w-[7px] bg-white" />
    <div className="mt-40 border-b border-[#555]" />
    <div className="mb-2 mt-auto flex h-3 items-center justify-center border border-[#555]">
      <span className="h-0 w-0 border-x-4 border-t-4 border-x-transparent border-t-[#888]" />
    </div>
    <div className="h-[7px] w-0.5 bg-white" />
  </div>
);

const App: React.FC = () => (
  <div className="flex h-screen min-h-[1000px] overflow-hidden bg-[#f0f0f0] font-['Noto_Sans','Noto_Sans_CJK_SC',sans-serif] text-black">
    <SharedDefs />
    <BackgroundStrip />
    <div className="flex min-w-0 flex-1 flex-col">
      <TitleBar />
      <MenuBar />
      <ToolBar />
      <main className="flex min-h-0 flex-1">
        <WidgetBox />
        <div className="relative mx-[5px] min-w-0 flex-1 overflow-hidden border border-[#828790] bg-[#a0a0a0]">
          <FormWindow />
        </div>
        <div className="flex w-[651px] shrink-0 flex-col gap-1.5 pt-px">
          <ObjectInspector />
          <PropertyEditor />
        </div>
      </main>
      <footer className="h-[25px] shrink-0" />
      <div className="h-[9px] shrink-0 border-t border-[#a9b6c3] bg-linear-to-r from-[#d5e8f7] via-[#d9ebf7] to-[#d3e3f5]" />
    </div>
  </div>
);

export default App;
